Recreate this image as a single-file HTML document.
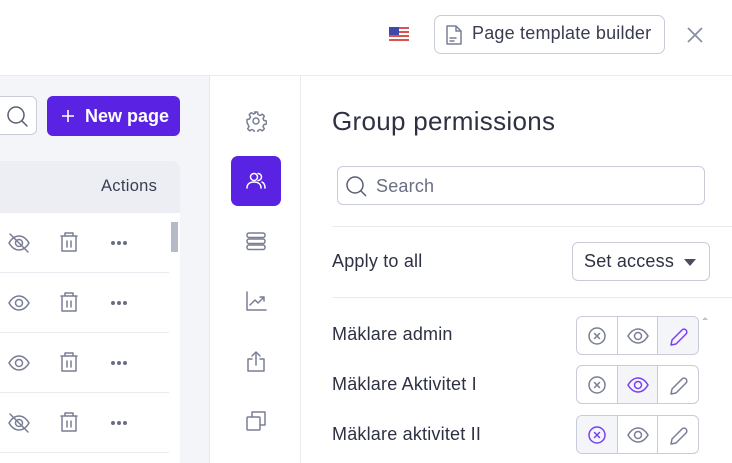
<!DOCTYPE html>
<html><head><meta charset="utf-8"><style>
*{box-sizing:border-box;margin:0;padding:0}
body{width:732px;height:463px;overflow:hidden;background:#fff;font-family:"Liberation Sans",sans-serif;color:#2e3142;position:relative}
.abs{position:absolute}
svg{display:block}
.ic{stroke:#7a7e94;fill:none;stroke-width:1.5;stroke-linecap:round;stroke-linejoin:round}
.grp{position:absolute;left:576px;width:123px;height:39px;border:1px solid #c9ccd8;border-radius:6px;overflow:hidden;display:flex}
.grp div{flex:1;border-left:1px solid #c9ccd8;display:flex;align-items:center;justify-content:center}
.grp div:first-child{border-left:none}
.grp .on{background:#f4f5f8}
.lbl{font-size:18px;letter-spacing:0.2px}
</style></head><body>
<svg width="0" height="0" style="position:absolute"><defs>
<g id="x"><circle cx="11" cy="11" r="8"/><path d="M8.5 8.5l5 5M13.5 8.5l-5 5"/></g>
<g id="e"><path d="M1 11c3-5 6-7 10-7s7 2 10 7c-3 5-6 7-10 7s-7-2-10-7z"/><circle cx="11" cy="11" r="3.5"/></g>
<g id="p"><path d="M4 20l1-5 10-10a2 2 0 014 4L9 19z"/></g>
</defs></svg>
<!-- top bar -->
<div class="abs" style="left:0;top:75px;width:732px;height:1px;background:#e9ebf0"></div>
<div class="abs" style="left:389px;top:27px;width:20px;height:14px;background:repeating-linear-gradient(#d9534f 0 2px,#fff 2px 4px)"></div>
<div class="abs" style="left:389px;top:27px;width:10px;height:8px;background:#3f4aa6"></div>
<div class="abs" style="left:434px;top:15px;width:231px;height:39px;border:1px solid #c9ccd8;border-radius:7px"></div>
<svg class="abs ic" style="left:444px;top:24px" width="20" height="22" viewBox="0 0 20 22"><path d="M3 2h9l5 5v13H3z M12 2v5h5 M6 14h6 M6 17h4"/></svg>
<div class="abs lbl" style="left:472px;top:23px;color:#3a3d50">Page template builder</div>
<svg class="abs" style="left:686px;top:26px" width="18" height="18"><path d="M2 2L16 16M16 2L2 16" stroke="#8b8fa3" stroke-width="1.8"/></svg>
<!-- left panel -->
<div class="abs" style="left:0;top:76px;width:210px;height:387px;background:#f4f5f8;border-right:1px solid #e6e8ee"></div>
<div class="abs" style="left:-10px;top:96px;width:47px;height:39px;background:#fff;border:1px solid #c9ccd8;border-radius:6px"></div>
<svg class="abs ic" style="left:5px;top:104px" width="24" height="24"><circle cx="11" cy="11" r="8" stroke="#5a5e72"/><path d="M17 17l5 5" stroke="#5a5e72"/></svg>
<div class="abs" style="left:47px;top:96px;width:133px;height:40px;background:#5a23e3;border-radius:6px;color:#fff;font-size:18px;font-weight:bold;line-height:40px;padding-left:38px">New page</div>
<svg class="abs" style="left:61px;top:109px" width="14" height="14"><path d="M7 1v12M1 7h12" stroke="#fff" stroke-width="1.6"/></svg>
<div class="abs" style="left:0;top:161px;width:180px;height:302px;background:#fff;border-radius:0 8px 0 0;overflow:hidden">
 <div style="height:52px;background:#eceef3;font-size:16.5px;letter-spacing:0.3px;padding:16px 0 0 101px;color:#3a3d50">Actions</div>
</div>
<div class="abs" style="left:171px;top:222px;width:7px;height:30px;background:#b6bac6"></div>
<div class="abs" style="left:0;top:272px;width:169px;height:1px;background:#e9ebf0"></div>
<div class="abs" style="left:0;top:332px;width:169px;height:1px;background:#e9ebf0"></div>
<div class="abs" style="left:0;top:392px;width:169px;height:1px;background:#e9ebf0"></div>
<div class="abs" style="left:0;top:452px;width:169px;height:1px;background:#e9ebf0"></div>
<svg class="abs" style="left:0;top:228px" width="140" height="230" viewBox="0 0 140 230">
<g class="ic">
<g transform="translate(19,15)"><path d="M-10 0c3-5 6-7 10-7s7 2 10 7c-3 5-6 7-10 7s-7-2-10-7z"/><circle r="3.5"/><path d="M-9-9L9 9"/></g>
<g transform="translate(19,75)"><path d="M-10 0c3-5 6-7 10-7s7 2 10 7c-3 5-6 7-10 7s-7-2-10-7z"/><circle r="3.5"/></g>
<g transform="translate(19,135)"><path d="M-10 0c3-5 6-7 10-7s7 2 10 7c-3 5-6 7-10 7s-7-2-10-7z"/><circle r="3.5"/></g>
<g transform="translate(19,195)"><path d="M-10 0c3-5 6-7 10-7s7 2 10 7c-3 5-6 7-10 7s-7-2-10-7z"/><circle r="3.5"/><path d="M-9-9L9 9"/></g>
<g id="t"><path d="M61 8h16M65 8V5h8v3M62 8v15h14V8M67 13v6M71 13v6"/></g>
<use href="#t" y="60"/><use href="#t" y="120"/><use href="#t" y="180"/>
</g>
<g fill="#6a6e82"><g id="d"><circle cx="113" cy="15" r="2"/><circle cx="119" cy="15" r="2"/><circle cx="125" cy="15" r="2"/></g><use href="#d" y="60"/><use href="#d" y="120"/><use href="#d" y="180"/></g>
</svg>
<!-- sidebar -->
<div class="abs" style="left:300px;top:76px;width:1px;height:387px;background:#e9ebf0"></div>
<svg class="abs ic" style="left:245px;top:110px" width="22" height="22" viewBox="0 0 22 22"><circle cx="11" cy="11" r="3"/><path d="M9.5 2h3l.5 2.5 2 1 2.3-1.3 2 2-1.3 2.3 1 2 2.5.5v3l-2.5.5-1 2 1.3 2.3-2 2-2.3-1.3-2 1-.5 2.5h-3l-.5-2.5-2-1-2.3 1.3-2-2 1.3-2.3-1-2L2 12.5v-3l2.5-.5 1-2-1.3-2.3 2-2 2.3 1.3 2-1z"/></svg>
<div class="abs" style="left:231px;top:156px;width:50px;height:50px;background:#5a23e3;border-radius:7px"></div>
<svg class="abs" style="left:245px;top:170px" width="22" height="22" viewBox="0 0 22 22" fill="none" stroke="#fff" stroke-width="1.5" stroke-linecap="round"><circle cx="9" cy="7" r="3.5"/><path d="M2 18c0-4 3-6 7-6s7 2 7 6M13 3.5a3.5 3.5 0 010 7M17 12c2 1 3 3 3 6"/></svg>
<svg class="abs ic" style="left:245px;top:230px" width="22" height="22"><rect x="2" y="3" width="18" height="4.5" rx="2"/><rect x="2" y="9" width="18" height="4.5" rx="2"/><rect x="2" y="15" width="18" height="4.5" rx="2"/></svg>
<svg class="abs ic" style="left:245px;top:290px" width="22" height="22"><path d="M2 2v18h19M5 15l5-5 3 3 6-6M15 7h4v4"/></svg>
<svg class="abs ic" style="left:245px;top:350px" width="22" height="22"><path d="M7 9H3v12h16V9h-4M11 15V2M7 6l4-4 4 4"/></svg>
<svg class="abs ic" style="left:245px;top:410px" width="22" height="22"><rect x="2" y="7" width="13" height="13" rx="1"/><path d="M7 7V2h13v13h-5"/></svg>
<!-- right panel -->
<div class="abs" style="left:332px;top:106px;font-size:26px;letter-spacing:0.3px;color:#2e3142">Group permissions</div>
<div class="abs" style="left:337px;top:166px;width:368px;height:39px;border:1px solid #c9ccd8;border-radius:6px"></div>
<svg class="abs" style="left:345px;top:175px" width="24" height="24" fill="none" stroke="#5a5e72" stroke-width="1.5"><circle cx="10" cy="10" r="8"/><path d="M16 16l5 5"/></svg>
<div class="abs lbl" style="left:376px;top:176px;color:#6a6e82">Search</div>
<div class="abs" style="left:332px;top:226px;width:400px;height:1px;background:#e9ebf0"></div>
<div class="abs lbl" style="left:332px;top:251px">Apply to all</div>
<div class="abs lbl" style="left:572px;top:242px;width:138px;height:39px;border:1px solid #c9ccd8;border-radius:6px;padding:8px 0 0 11px">Set access</div>
<svg class="abs" style="left:684px;top:259px" width="12" height="7"><path d="M0 0h12L6 7z" fill="#4a4d60"/></svg>
<div class="abs" style="left:332px;top:297px;width:400px;height:1px;background:#e9ebf0"></div>
<div class="abs lbl" style="left:332px;top:324px">Mäklare admin</div>
<div class="abs lbl" style="left:332px;top:374px">Mäklare Aktivitet I</div>
<div class="abs lbl" style="left:332px;top:424px">Mäklare aktivitet II</div>
<svg class="abs" style="left:701px;top:316px" width="8" height="5"><path d="M1 4l3-3 3 3z" fill="#c0c3ce"/></svg>
<div class="grp" style="top:316px"><div><svg class="ic" width="22" height="22"><use href="#x"/></svg></div><div><svg class="ic" width="22" height="22"><use href="#e"/></svg></div><div class="on"><svg class="ic" width="22" height="22" style="stroke:#7b3ff2"><use href="#p"/></svg></div></div>
<div class="grp" style="top:365px"><div><svg class="ic" width="22" height="22"><use href="#x"/></svg></div><div class="on"><svg class="ic" width="22" height="22" style="stroke:#7b3ff2"><use href="#e"/></svg></div><div><svg class="ic" width="22" height="22"><use href="#p"/></svg></div></div>
<div class="grp" style="top:415px"><div class="on"><svg class="ic" width="22" height="22" style="stroke:#7b3ff2"><use href="#x"/></svg></div><div><svg class="ic" width="22" height="22"><use href="#e"/></svg></div><div><svg class="ic" width="22" height="22"><use href="#p"/></svg></div></div>
</body></html>
